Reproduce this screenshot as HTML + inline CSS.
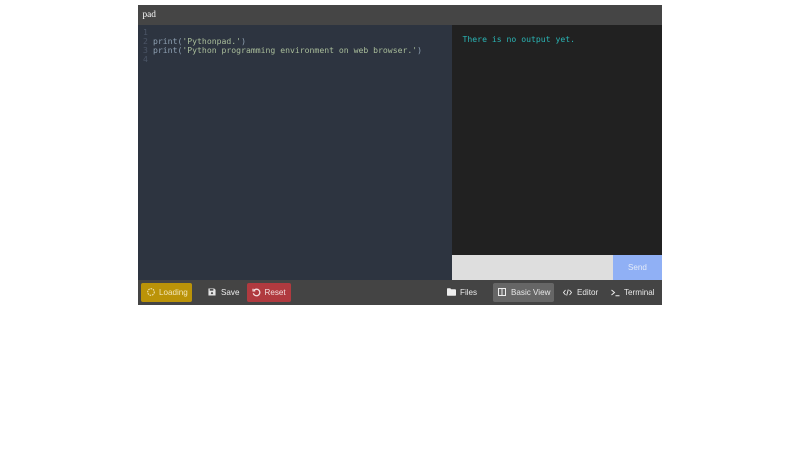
<!DOCTYPE html>
<html>
<head>
<meta charset="utf-8">
<style>
html,body{margin:0;padding:0;background:#fff;width:800px;height:450px;overflow:hidden}
.a{position:absolute}
#app{position:absolute;left:138px;top:5px;width:524px;height:300px;background:#444;overflow:hidden}
.t{position:absolute;white-space:pre;font-family:"Liberation Sans",sans-serif;font-size:8.100px;line-height:12px;color:#e6e6e6}
.m{position:absolute;white-space:pre;font-family:"DejaVu Sans Mono","Liberation Mono",monospace;font-size:8.130px;line-height:9.300px}
svg{position:absolute;overflow:visible}
</style>
</head>
<body>
<div id="app">
  <div class="a" style="left:0;top:0;width:524px;height:20px;background:#454545"></div>
  <div class="t" style="left:4.500px;top:4px;font-family:'Liberation Serif',serif;font-size:9.300px;color:#fff">pad</div>

  <div class="a" style="left:0;top:20px;width:314px;height:255px;background:#2d3440"></div>
  <div class="m" style="left:5px;top:22.500px;color:#4b5566">1
2
3
4</div>
  <div class="m" style="left:15px;top:31.800px;color:#8fa1b3">print(<span style="color:#a9bd9a">'Pythonpad.'</span>)
print(<span style="color:#a9bd9a">'Python programming environment on web browser.'</span>)</div>

  <div class="a" style="left:314px;top:20px;width:210px;height:230px;background:#212121"></div>
  <div class="m" style="left:324.500px;top:30px;color:#2ab5b5">There is no output yet.</div>

  <div class="a" style="left:314px;top:250px;width:161px;height:25px;background:#dedede"></div>
  <div class="a" style="left:475px;top:250px;width:49px;height:25px;background:#90b0f5"></div>
  <div class="t" style="left:490px;top:257px;color:#e4ebf8">Send</div>

  <div class="a" style="left:3px;top:278px;width:51px;height:19px;background:#bb9308;border-radius:2px"></div>
  <svg style="left:9px;top:283px" width="8" height="8" viewBox="0 0 8 8" fill="none" stroke="#f0e3b0" stroke-width="1.100" stroke-dasharray="1.600 .9"><circle cx="4" cy="4" r="3.300"/></svg>
  <div class="t" style="left:21px;top:282px;color:#f2e6b8">Loading</div>

  <svg style="left:70px;top:283px" width="8" height="8" viewBox="0 0 9 9"><path d="M.5.5H7L8.500 2V8.500H.5Z" fill="#e4e4e4"/><rect x="2" y="1.200" width="4" height="1.800" fill="#444"/><circle cx="4.500" cy="5.800" r="1.200" fill="#444"/></svg>
  <div class="t" style="left:83px;top:282px;color:#eee">Save</div>

  <div class="a" style="left:109px;top:278px;width:44px;height:19px;background:#b03a3f;border-radius:2px"></div>
  <svg style="left:114px;top:282.500px" width="9" height="9" viewBox="0 0 9 9" fill="none" stroke="#f5e0e0" stroke-width="1.300"><path d="M2 2.300A3.300 3.300 0 1 1 1.300 5.300"/><path d="M1 .8V3H3.300" stroke-width="1.100"/></svg>
  <div class="t" style="left:126.500px;top:282px;color:#f2dcdc">Reset</div>

  <svg style="left:309px;top:283px" width="9" height="8" viewBox="0 0 9 8"><path d="M0 1C0 .5.400.3.800.3H3.300L4.200 1.300H8C8.600 1.300 9 1.700 9 2.200V7C9 7.500 8.600 7.800 8 7.800H1C.4 7.800 0 7.500 0 7Z" fill="#eee"/></svg>
  <div class="t" style="left:322px;top:282px;color:#e8e8e8">Files</div>

  <div class="a" style="left:355px;top:278px;width:61px;height:19px;background:#666;border-radius:2px"></div>
  <svg style="left:360px;top:283px" width="8" height="8" viewBox="0 0 8 8" fill="none" stroke="#eee" stroke-width="1"><rect x=".5" y=".5" width="7" height="7"/><path d="M4 .5V7.500"/></svg>
  <div class="t" style="left:373px;top:282px;color:#e8e8e8">Basic View</div>

  <svg style="left:425px;top:283.500px" width="9" height="7" viewBox="0 0 9 7" fill="none" stroke="#eee" stroke-width=".9"><path d="M2.500 1L.5 3.500L2.500 6M6.500 1L8.500 3.500L6.500 6M5.300 .5L3.700 6.500"/></svg>
  <div class="t" style="left:439px;top:282px;color:#e8e8e8">Editor</div>

  <svg style="left:473px;top:283.500px" width="9" height="8" viewBox="0 0 9 8" fill="none" stroke="#eee" stroke-width="1"><path d="M.5 1L3.500 3.500L.5 6M4.500 6.800H8.500"/></svg>
  <div class="t" style="left:486px;top:282px;color:#e8e8e8">Terminal</div>
</div>
</body>
</html>
